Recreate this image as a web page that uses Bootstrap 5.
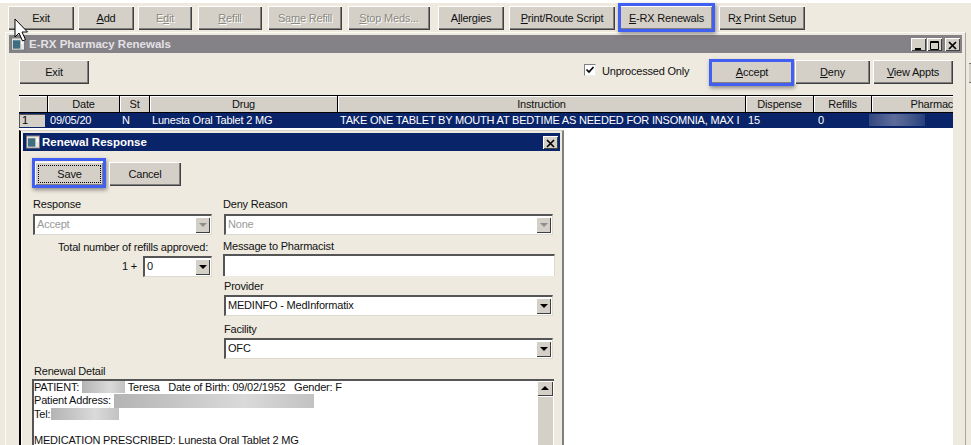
<!DOCTYPE html>
<html lang="en"><head><meta charset="utf-8"><title>E-RX Pharmacy Renewals</title>
<link href="https://cdn.jsdelivr.net/npm/bootstrap@5.3.0/dist/css/bootstrap.min.css" rel="stylesheet">
<style>
html,body{height:445px;overflow:hidden}
body{background:#eeeadf;font:11px/14px "Liberation Sans",Arial,sans-serif;letter-spacing:-.2px;color:#111;position:relative}
.topstrip{height:3px;background:#fff}
.wbtn{--bs-btn-padding-x:0;--bs-btn-padding-y:0;--bs-btn-font-size:11px;--bs-btn-line-height:14px;--bs-btn-border-radius:0;--bs-btn-border-width:0;--bs-btn-bg:#d4d0c8;--bs-btn-color:#111;--bs-btn-hover-bg:#d4d0c8;--bs-btn-hover-color:#111;--bs-btn-disabled-bg:#d4d0c8;--bs-btn-disabled-color:#8a8880;--bs-btn-disabled-opacity:1;height:24px;flex:none;position:relative;letter-spacing:-.2px;box-shadow:inset 1px 1px #fff,inset -1px -1px #404040,inset -2px -2px #808080}
.wbtn:disabled{text-shadow:1px 1px #fff}
.hl::after{content:"";position:absolute;border:3px solid #4160f2;box-shadow:1px 2px 4px rgba(60,60,60,.55);pointer-events:none}
.tools{padding:3px 0 0 8px;gap:4px;height:27px}
.t1{width:66px}.t2{width:56px}.t3{width:54px;margin-left:0}.t4{width:64px;margin-left:2px}.t5{width:74px;margin-left:2px}.t6{width:82px;margin-left:2px}.t7{width:66px;margin-left:4px}.t8{width:106px;margin-left:1px}.t9{width:93px;margin-left:1px}.t10{width:86px;margin-left:2px}
.t9::after{inset:-3px -2px -2px -2px}
.winframe{margin:2px 0 0 5px;width:961px;height:413px;padding:2px 3px 0;border-left:1px solid #fbfaf6;border-top:1px solid #fbfaf6;border-right:1px solid #a8a69f}
.tbar{height:18px;background:#858287;color:#e3e1e6;font-weight:700;font-size:11.5px;letter-spacing:0;padding-left:2px;gap:4px}
.wicon{width:14px;height:14px;flex:none}
.ctl{width:15px;height:13px;background:#d4d0c8;box-shadow:inset 1px 1px #fff,inset -1px -1px #404040;flex:none}
.ctls{gap:1px;padding-right:2px;margin-left:auto}
.ctl3{margin-left:2px}
.actbar{padding:7px 0 0 10px;height:42px}
.ex{width:70px}
.chk{width:12px;height:12px;background:#fff;border:1px solid #808080;border-right-color:#eee;border-bottom-color:#eee;flex:none;margin-left:495px}
.chklbl{margin-left:6px;width:109px}
.acc{width:82px;margin-left:0}.den{width:75px;margin-left:2px}.vap{width:80px;margin-left:3px}
.acc::after{inset:-1px -1px -2px -2px}
.gridbox{margin-left:10px;width:934px;height:351px;background:#fff;overflow:hidden}
.gh{display:grid;grid-template-columns:29px 72px 30px 188px 408px 68px 58px 126px;height:18px;background:#000;column-gap:0}
.gh>div{background:#d4d0c8;box-shadow:inset 1px 1px #fff;margin:1px 1px 1px 0;text-align:center;line-height:16px;white-space:nowrap;overflow:hidden}
.grow{display:grid;grid-template-columns:29px 72px 30px 188px 408px 68px 58px 81px;height:15px;background:#0a246a;color:#fff;line-height:14px;white-space:nowrap}
.grow>div{overflow:hidden;padding-left:2px}
.grow>.rn{background:#d4d0c8;color:#000;margin:1px 3px 1px 0;box-shadow:inset 1px 1px #555;padding-left:3px;line-height:13px}
.grow>.phc{margin-left:-3px;padding-left:0}
.smear{background:linear-gradient(90deg,#b4b4b4,#c8c8c8 35%,#dadada 65%,#c2c2c2);display:inline-block;flex:none}
.sm1{width:56px;height:12px;background:linear-gradient(90deg,#34487f,#5d6c9c 45%,#44578a 75%,#26407c);margin-top:1px}
.dlg{position:absolute;left:19px;top:130px;width:545px;height:315px;background:#eeeadf;border-top:1px solid #d4d0c8;border-left:2px solid #000;border-right:2px solid #808080;padding:2px 2px 0 2px;box-shadow:inset 1px 0 #fff}
.dt{height:18px;background:#0a246a;color:#fff;font-weight:700;font-size:11.5px;letter-spacing:0;padding:0 2px 0 3px;gap:2px}
.dlgbtns{padding:11px 0 0 12px;gap:5px;height:46px}
.sv{width:69px}.cn{width:72px}
.sv::after{inset:-4px -2px -2px -3px}
.sv::before{content:"";position:absolute;inset:3px;border:1px dotted #000}
.frm{display:grid;grid-template-columns:190px 332px;padding-left:10px;column-gap:0}
.lab{height:14px;line-height:14px;white-space:nowrap}
.combo{height:21px;background:#fff;border-top:2px solid #555;border-left:2px solid #555;border-right:1px solid #dcd9cf;border-bottom:1px solid #dcd9cf;padding-left:2px;line-height:17px}
.combo .arr{margin-left:auto;width:15px;height:16px;margin-top:1px;margin-right:1px;flex:none;background:#d4d0c8;box-shadow:inset 1px 1px #fff,inset -1px -1px #404040;position:relative}
.combo .arr::after{content:"";position:absolute;left:4px;top:6px;border:4px solid transparent;border-top:4px solid #000;border-bottom:0}
.combo.off{color:#9a9a9a;margin-top:3px}.combo.off .arr::after{border-top-color:#8e8e8e}
.c1{width:179px}.c2{width:329px;margin-left:1px}.c3{width:69px}.c4{width:329px;margin-left:1px}
.g1{padding-right:14px}
.totl{margin-top:5px;text-align:right;padding-right:5px;width:180px}
.onep{gap:6px;justify-content:flex-end;margin:2px 0 0;padding-right:11px;width:190px;height:20px;line-height:20px}
.msg{height:22px;background:#fff;border-top:2px solid #555;border-left:2px solid #555;border-right:1px solid #dcd9cf;width:332px;margin-top:1px}
.lb2{margin:3px 0 2px 1px}
.lb3{margin:6px 0 2px 1px}
.dtl{margin:5px 0 0 11px}
.ta{margin:1px 0 0 9px;width:522px;height:70px;background:#fff;border-top:2px solid #555;border-left:2px solid #555;overflow:hidden;line-height:13px}
.tatxt{flex:1;white-space:nowrap;overflow:hidden}
.sb{width:16px;height:100%;margin-right:1px;background:#d4d0c8;flex:none}
.sbu{height:15px;background:#d4d0c8;box-shadow:inset 1px 1px #fff,inset -1px -1px #404040;position:relative}
.sbu::after{content:"";position:absolute;left:4px;top:5px;border:4px solid transparent;border-bottom:4px solid #000;border-top:0}
.sbt{height:60px;box-shadow:inset 1px 1px #fff}
.s2{width:43px;height:12px}
.s3{width:200px;height:14px;margin-left:3px}
.s4{width:68px;height:12px;margin-left:1px}
.ptr{position:absolute;left:14px;top:18px;width:14px;height:25px}
.edge{position:absolute;right:0;top:63px;width:2px;height:20px;border-top:1px solid #777;border-bottom:1px solid #777;background:#d4d0c8}
</style></head><body>
<div class="topstrip"></div>
<div class="d-flex tools">
<button class="btn wbtn t1">Exit</button><button class="btn wbtn t2"><u>A</u>dd</button>
<button class="btn wbtn t3" disabled>E<u>d</u>it</button><button class="btn wbtn t4" disabled><u>R</u>efill</button>
<button class="btn wbtn t5" disabled>Sa<u>m</u>e Refill</button><button class="btn wbtn t6" disabled><u>S</u>top Meds...</button>
<button class="btn wbtn t7">A<u>l</u>lergies</button><button class="btn wbtn t8"><u>P</u>rint/Route Script</button>
<button class="btn wbtn t9 hl"><u>E</u>-RX Renewals</button><button class="btn wbtn t10">R<u>x</u> Print Setup</button>
</div>
<div class="winframe">
 <div class="tbar d-flex align-items-center">
  <svg class="wicon" viewBox="0 0 15 14"><rect x=".5" y=".5" width="14" height="13" fill="#e8e6e0" stroke="#777"/><rect x="2" y="3" width="8" height="9" fill="#3d6f80"/><rect x="11" y="3" width="2" height="4" fill="#fff"/></svg>
  <span>E-RX Pharmacy Renewals</span>
  <div class="d-flex ctls">
   <div class="ctl"><svg width="15" height="13" viewBox="0 0 15 13"><rect x="4" y="9" width="6" height="2"/></svg></div>
   <div class="ctl"><svg width="15" height="13" viewBox="0 0 15 13"><path d="M3.5 2.500h8v8h-8z M3 3.500h9" fill="none" stroke="#000"/></svg></div>
   <div class="ctl ctl3"><svg width="15" height="13" viewBox="0 0 15 13"><path d="M4 3l7 7M11 3l-7 7" stroke="#000" stroke-width="1.7"/></svg></div>
  </div>
 </div>
 <div class="d-flex actbar align-items-start">
  <button class="btn wbtn ex">Exit</button>
  <div class="chk mt-1 d-flex"><svg width="10" height="10" viewBox="0 0 10 10"><path d="M1.500 4.500l2.500 2.500 4.500-5" fill="none" stroke="#000" stroke-width="1.7"/></svg></div>
  <div class="chklbl mt-1">Unprocessed Only</div>
  <button class="btn wbtn acc hl"><u>A</u>ccept</button><button class="btn wbtn den"><u>D</u>eny</button><button class="btn wbtn vap"><u>V</u>iew Appts</button>
 </div>
 <div class="gridbox">
  <div class="gh"><div></div><div>Date</div><div>St</div><div>Drug</div><div>Instruction</div><div>Dispense</div><div>Refills</div><div>Pharmacy</div></div>
  <div class="grow"><div class="rn">1</div><div>09/05/20</div><div>N</div><div>Lunesta Oral Tablet 2 MG</div><div>TAKE ONE TABLET BY MOUTH AT BEDTIME AS NEEDED FOR INSOMNIA, MAX I</div><div>15</div><div class="ps-1">0</div><div class="phc"><span class="smear sm1"></span></div></div>
 </div>
</div>
<div class="edge"></div>
<div class="dlg">
 <div class="dt d-flex align-items-center">
  <svg class="wicon" viewBox="0 0 15 14"><rect x=".5" y=".5" width="14" height="13" fill="#e8e6e0" stroke="#777"/><rect x="2" y="3" width="8" height="9" fill="#3d6f80"/><rect x="11" y="3" width="2" height="4" fill="#fff"/></svg>
  <span>Renewal Response</span>
  <div class="ctl ms-auto"><svg width="15" height="13" viewBox="0 0 15 13"><path d="M4 3l7 7M11 3l-7 7" stroke="#000" stroke-width="1.7"/></svg></div>
 </div>
 <div class="d-flex dlgbtns"><button class="btn wbtn sv hl">Save</button><button class="btn wbtn cn">Cancel</button></div>
 <div class="frm">
  <div class="g1">
   <div class="lab">Response</div>
   <div class="combo off c1 d-flex">Accept<span class="arr"></span></div>
   <div class="lab totl">Total number of refills approved:</div>
   <div class="d-flex onep"><span>1 +</span><div class="combo c3 d-flex">0<span class="arr"></span></div></div>
  </div>
  <div>
   <div class="lab">Deny Reason</div>
   <div class="combo off c2 d-flex">None<span class="arr"></span></div>
   <div class="lab mt-1">Message to Pharmacist</div>
   <div class="msg"></div>
   <div class="lab lb2">Provider</div>
   <div class="combo c4 d-flex">MEDINFO - MedInformatix<span class="arr"></span></div>
   <div class="lab lb3">Facility</div>
   <div class="combo c4 d-flex">OFC<span class="arr"></span></div>
  </div>
 </div>
 <div class="lab dtl">Renewal Detail</div>
 <div class="ta d-flex">
  <div class="tatxt">
   <div class="d-flex">PATIENT:&nbsp;<span class="smear s2"></span>&nbsp;Teresa&nbsp;&nbsp; Date of Birth: 09/02/1952&nbsp;&nbsp; Gender: F</div>
   <div class="d-flex">Patient Address:<span class="smear s3"></span></div>
   <div class="d-flex">Tel:<span class="smear s4"></span></div>
   <div>&nbsp;</div>
   <div>MEDICATION PRESCRIBED: Lunesta Oral Tablet 2 MG</div>
  </div>
  <div class="sb"><div class="sbu"></div><div class="sbt"></div></div>
 </div>
</div>
<svg class="ptr" viewBox="0 0 14 25"><path d="M1 1v18l4-4 3.500 8 3-1.400-3.500-7.600h5.500z" fill="#fff" stroke="#000"/></svg>
</body></html>
